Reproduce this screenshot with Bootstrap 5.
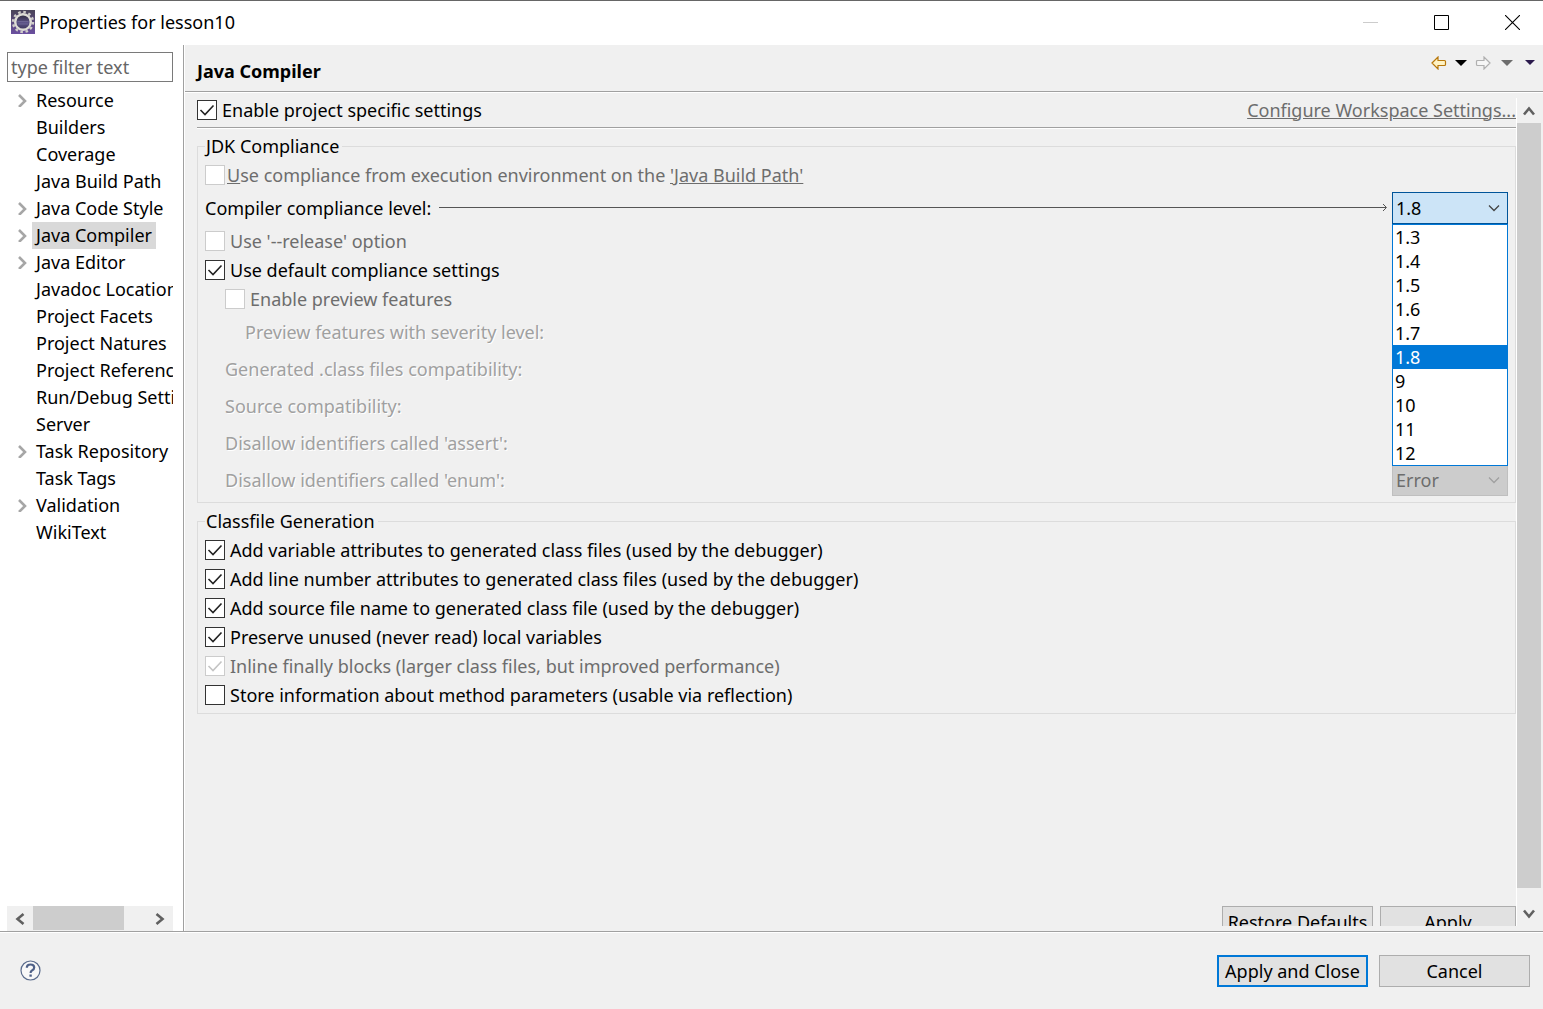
<!DOCTYPE html>
<html lang="en">
<head>
<meta charset="utf-8">
<meta name="viewport" content="width=device-width, initial-scale=1">
<title>Properties for lesson10</title>
<link href="https://cdn.jsdelivr.net/npm/bootstrap@5.3.0/dist/css/bootstrap.min.css" rel="stylesheet">
<style>
body{font-family:"Noto Sans","Open Sans",sans-serif;font-size:18px;line-height:24px;color:#000;background:#f0f0f0;min-height:600px}
svg{display:block;flex:none}
.titlebar{height:45px;border-top:1px solid #666;background:#fff;padding:0 0 2px 11px}
.winbtns{gap:9px}
.winbtn{border:0;background:none;padding:0;width:62px;height:42px;display:flex;align-items:center;justify-content:center}
.side{width:184px;background:#fff;border-right:1px solid #a0a0a0;padding:7px 10px 0 7px}
.filter{height:30px;border:1px solid #7a7a7a;border-radius:0;padding:0 3px;font-size:18px;line-height:24px;color:#000}
.filter::placeholder{color:#666}
.tree{margin:5px 0 0;padding:0}
.tree li{height:27px;padding-left:10px}
.tree a{color:#000;text-decoration:none;line-height:27px;padding:0 4px;white-space:nowrap}
.tree a.current{background:#d9d9d9}
.twist{width:15px;height:13px;flex:none}
.hbar{height:25px;background:#f0f0f0}
.arrow{width:26px;height:25px;border:0;padding:0;background:none;display:flex;align-items:center;justify-content:center}
.hthumb{width:91px;height:24px;background:#cdcdcd}
.pagehead{height:48px;border-bottom:1px solid #fff;box-shadow:inset 0 -1px #a0a0a0;padding:4px 8px 0 12px}
.pagehead h1{font-size:18px;line-height:24px;font-weight:700;margin:0}
.tool{border:0;background:none;padding:0}
.content{padding:2px 1px 5px 12px}
.line{height:29px}
.combo-line{height:37px}
.rule{height:2px;margin:3px 0;background:#a0a0a0;border-bottom:1px solid #fff}
.grp{border:1px solid #dcdcdc;padding:0 7px 4px;margin-bottom:4px}
.grp legend{float:none;width:auto;margin:0;padding:0 3px 0 1px;font-size:18px;line-height:28px}
.tick{appearance:none;width:20px;height:20px;margin:0 5px 0 0;border:1px solid #333;background:#fff center/18px 18px no-repeat;flex:none}
.tick:checked{background-image:url("data:image/svg+xml,%3Csvg xmlns='http://www.w3.org/2000/svg' viewBox='0 0 18 18'%3E%3Cpath d='M2.5 9 L7 13.5 L15.5 4.5' fill='none' stroke='%23222' stroke-width='1.6'/%3E%3C/svg%3E")}
.tick:disabled{border-color:#ccc}
.tick:disabled:checked{background-image:url("data:image/svg+xml,%3Csvg xmlns='http://www.w3.org/2000/svg' viewBox='0 0 18 18'%3E%3Cpath d='M2.5 9 L7 13.5 L15.5 4.5' fill='none' stroke='%23c4c4c4' stroke-width='1.6'/%3E%3C/svg%3E")}
.tick:disabled+label,.dim,.dim a{color:#6d6d6d}
.tight{margin-right:2px}
.in1{padding-left:20px}
.in2{padding-left:40px}
.etched{color:#a0a0a0;text-shadow:1px 1px #fff}
.leader{height:1px;background:#555}
.combo{width:116px;height:32px;border:1px solid #bfbfbf;border-radius:0;appearance:none;padding:0 3px;font-size:18px;line-height:24px;color:#6d6d6d;opacity:1;background:#ccc url("data:image/svg+xml,%3Csvg xmlns='http://www.w3.org/2000/svg' viewBox='0 0 12 8'%3E%3Cpath d='M1 1.5 L6 6.5 L11 1.5' fill='none' stroke='%23a0a0a0' stroke-width='1.3'/%3E%3C/svg%3E") right 7px center/12px 8px no-repeat}
.combo.open{border-color:#005499;color:#000;background-color:#cce4f7;background-image:url("data:image/svg+xml,%3Csvg xmlns='http://www.w3.org/2000/svg' viewBox='0 0 12 8'%3E%3Cpath d='M1 1.5 L6 6.5 L11 1.5' fill='none' stroke='%23444' stroke-width='1.3'/%3E%3C/svg%3E")}
.levels{position:absolute;top:100%;left:0;width:100%;min-width:0;padding:0;margin:0;border:1px solid #0078d7;border-radius:0;background:#fff;font-size:18px;color:#000}
.levels .dropdown-item{padding:0 2px;line-height:24px;color:#000}
.levels .dropdown-item.active{background:#0078d7;color:#fff}
.cmd{height:32px;min-width:151px;border:1px solid #adadad;border-radius:0;background:#e1e1e1;color:#000;font-size:18px;line-height:24px;padding:0 3px}
.cmd.primary{border:2px solid #0078d7}
.cmd.short{min-width:136px}
.cut{height:20px;overflow:hidden;gap:7px}
.vbar{width:24px;margin:5px 2px 5px 0;box-shadow:-1px 0 #fff}
.vbar .arrow{width:24px}
.vthumb{height:765px;flex:0 1 765px;background:#cdcdcd}
.foot{height:78px;border-top:1px solid #a0a0a0;box-shadow:inset 0 1px #fff;padding:0 13px 0 20px}
.footbtns{gap:11px}
</style>
</head>
<body class="vh-100 d-flex flex-column overflow-hidden">
<header class="titlebar d-flex align-items-center flex-shrink-0">
  <svg width="24" height="24" viewBox="0 0 24 24" aria-hidden="true">
    <defs><linearGradient id="sky" x1="0" y1="0" x2="0" y2="1"><stop offset="0" stop-color="#4a4458"/><stop offset="1" stop-color="#6b4fa0"/></linearGradient>
    <linearGradient id="core" x1="0" y1="0" x2="0" y2="1"><stop offset="0" stop-color="#2c2838"/><stop offset=".55" stop-color="#5d5389"/><stop offset="1" stop-color="#3a3358"/></linearGradient></defs>
    <rect width="24" height="24" fill="url(#sky)"/>
    <circle cx="12" cy="12" r="10" fill="none" stroke="#cfcdc9" stroke-width="2.400" stroke-dasharray="2.6 2.636"/>
    <circle cx="12" cy="12" r="7.800" fill="url(#core)" stroke="#dedcd6" stroke-width="2.400"/>
    <path d="M6.500 11.500h11M7 14h10" stroke="#7d76a5" stroke-width=".6"/>
  </svg>
  <span class="ms-1 me-auto">Properties for lesson10</span>
  <div class="winbtns d-flex">
    <button class="winbtn" aria-label="Minimize" disabled><svg width="15" height="15"><path d="M0 7.500h15" stroke="#ccc"/></svg></button>
    <button class="winbtn" aria-label="Maximize"><svg width="15" height="15"><path d="M.5 .5h14v14h-14z" fill="none" stroke="#000"/></svg></button>
    <button class="winbtn" aria-label="Close"><svg width="15" height="15"><path d="M0 0l15 15M15 0L0 15" stroke="#000" stroke-width="1.1"/></svg></button>
  </div>
</header>

<div class="d-flex flex-grow-1 overflow-hidden">
  <nav class="side d-flex flex-column flex-shrink-0" aria-label="Property pages">
    <input class="filter w-100 flex-shrink-0" type="text" placeholder="type filter text" aria-label="type filter text">
    <ul class="tree list-unstyled flex-grow-1 overflow-hidden">
      <li class="d-flex align-items-center"><svg class="twist" viewBox="0 0 15 13"><path d="M2 1l6 6l-6 6" fill="none" stroke="#a6a6a6" stroke-width="2.600"/></svg><a href="#">Resource</a></li>
      <li class="d-flex align-items-center"><span class="twist"></span><a href="#">Builders</a></li>
      <li class="d-flex align-items-center"><span class="twist"></span><a href="#">Coverage</a></li>
      <li class="d-flex align-items-center"><span class="twist"></span><a href="#">Java Build Path</a></li>
      <li class="d-flex align-items-center"><svg class="twist" viewBox="0 0 15 13"><path d="M2 1l6 6l-6 6" fill="none" stroke="#a6a6a6" stroke-width="2.600"/></svg><a href="#">Java Code Style</a></li>
      <li class="d-flex align-items-center"><svg class="twist" viewBox="0 0 15 13"><path d="M2 1l6 6l-6 6" fill="none" stroke="#a6a6a6" stroke-width="2.600"/></svg><a href="#" class="current" aria-current="page">Java Compiler</a></li>
      <li class="d-flex align-items-center"><svg class="twist" viewBox="0 0 15 13"><path d="M2 1l6 6l-6 6" fill="none" stroke="#a6a6a6" stroke-width="2.600"/></svg><a href="#">Java Editor</a></li>
      <li class="d-flex align-items-center"><span class="twist"></span><a href="#">Javadoc Location</a></li>
      <li class="d-flex align-items-center"><span class="twist"></span><a href="#">Project Facets</a></li>
      <li class="d-flex align-items-center"><span class="twist"></span><a href="#">Project Natures</a></li>
      <li class="d-flex align-items-center"><span class="twist"></span><a href="#">Project References</a></li>
      <li class="d-flex align-items-center"><span class="twist"></span><a href="#">Run/Debug Settings</a></li>
      <li class="d-flex align-items-center"><span class="twist"></span><a href="#">Server</a></li>
      <li class="d-flex align-items-center"><svg class="twist" viewBox="0 0 15 13"><path d="M2 1l6 6l-6 6" fill="none" stroke="#a6a6a6" stroke-width="2.600"/></svg><a href="#">Task Repository</a></li>
      <li class="d-flex align-items-center"><span class="twist"></span><a href="#">Task Tags</a></li>
      <li class="d-flex align-items-center"><svg class="twist" viewBox="0 0 15 13"><path d="M2 1l6 6l-6 6" fill="none" stroke="#a6a6a6" stroke-width="2.600"/></svg><a href="#">Validation</a></li>
      <li class="d-flex align-items-center"><span class="twist"></span><a href="#">WikiText</a></li>
    </ul>
    <div class="hbar d-flex flex-shrink-0">
      <button class="arrow" aria-label="Scroll left"><svg width="10" height="12"><path d="M8.500 1l-6 5l6 5" fill="none" stroke="#606060" stroke-width="2.600"/></svg></button>
      <div class="hthumb me-auto"></div>
      <button class="arrow" aria-label="Scroll right"><svg width="10" height="12"><path d="M1.500 1l6 5l-6 5" fill="none" stroke="#606060" stroke-width="2.600"/></svg></button>
    </div>
  </nav>

  <main class="d-flex flex-column flex-grow-1 overflow-hidden border-start border-white">
    <div class="pagehead d-flex align-items-center flex-shrink-0">
      <h1 class="me-auto">Java Compiler</h1>
      <div class="d-flex align-items-center gap-2 pb-3">
        <button class="tool" aria-label="Back"><svg width="16" height="14"><path d="M1 7l6-6v3.500h6.500q1 0 1 1v3q0 1-1 1H7V13z" fill="#fff3c4" stroke="#b8780c" stroke-width="1.200"/></svg></button>
        <button class="tool" aria-label="Back history"><svg width="12" height="6"><path d="M0 0h12l-6 6z"/></svg></button>
        <button class="tool tight" aria-label="Forward" disabled><svg width="16" height="14"><path d="M15 7l-6-6v3.500H2.500q-1 0-1 1v3q0 1 1 1H9V13z" fill="#f6f6f6" stroke="#b0b0b0" stroke-width="1.200"/></svg></button>
        <button class="tool" aria-label="Forward history" disabled><svg width="12" height="6"><path d="M0 0h12l-6 6z" fill="#6d6d6d"/></svg></button>
        <button class="tool ms-1" aria-label="View menu"><svg width="10" height="5"><path d="M0 0h10l-5 5z" fill="#2b1a4d"/></svg></button>
      </div>
    </div>
    <div class="d-flex flex-grow-1 overflow-hidden">
      <div class="content d-flex flex-column flex-grow-1 overflow-hidden">
        <div class="line d-flex align-items-center flex-shrink-0">
          <input class="tick" type="checkbox" id="enable" checked><label for="enable" class="me-auto">Enable project specific settings</label>
          <span class="dim"><a href="#">Configure Workspace Settings...</a></span>
        </div>
        <div class="rule flex-shrink-0"></div>

        <fieldset class="grp">
          <legend>JDK Compliance</legend>
          <div class="line d-flex align-items-center dim"><input class="tick tight" type="checkbox" id="execenv" disabled><label for="execenv"><u>U</u>se compliance from execution environment on the <a href="#">'Java Build Path'</a></label></div>
          <div class="combo-line d-flex align-items-center">
            <label for="level">Compiler compliance level:</label>
            <span class="leader flex-grow-1 ms-2"></span>
            <svg class="me-1" width="7" height="9"><path d="M0 4.500h5M2 1l3.500 3.500l-3.500 3.500" fill="none" stroke="#555"/></svg>
            <div class="position-relative">
              <select class="combo open d-block" id="level"><option>1.3</option><option>1.4</option><option>1.5</option><option>1.6</option><option>1.7</option><option selected>1.8</option><option>9</option><option>10</option><option>11</option><option>12</option></select>
              <div class="levels dropdown-menu show">
                <button class="dropdown-item">1.3</button><button class="dropdown-item">1.4</button><button class="dropdown-item">1.5</button><button class="dropdown-item">1.6</button><button class="dropdown-item">1.7</button><button class="dropdown-item active">1.8</button><button class="dropdown-item">9</button><button class="dropdown-item">10</button><button class="dropdown-item">11</button><button class="dropdown-item">12</button>
              </div>
            </div>
          </div>
          <div class="line d-flex align-items-center"><input class="tick" type="checkbox" id="release" disabled><label for="release">Use '--release' option</label></div>
          <div class="line d-flex align-items-center"><input class="tick" type="checkbox" id="defaults" checked><label for="defaults">Use default compliance settings</label></div>
          <div class="line in1 d-flex align-items-center"><input class="tick" type="checkbox" id="preview" disabled><label for="preview">Enable preview features</label></div>
          <div class="combo-line in2 etched d-flex align-items-center"><span>Preview features with severity level:</span></div>
          <div class="combo-line in1 etched d-flex align-items-center"><span>Generated .class files compatibility:</span></div>
          <div class="combo-line in1 etched d-flex align-items-center"><span>Source compatibility:</span></div>
          <div class="combo-line in1 etched d-flex align-items-center"><span>Disallow identifiers called 'assert':</span></div>
          <div class="combo-line in1 etched d-flex align-items-center"><label for="enums" class="me-auto">Disallow identifiers called 'enum':</label><select class="combo" id="enums" disabled><option>Error</option></select></div>
        </fieldset>

        <fieldset class="grp">
          <legend>Classfile Generation</legend>
          <div class="line d-flex align-items-center"><input class="tick" type="checkbox" id="vars" checked><label for="vars">Add variable attributes to generated class files (used by the debugger)</label></div>
          <div class="line d-flex align-items-center"><input class="tick" type="checkbox" id="lines" checked><label for="lines">Add line number attributes to generated class files (used by the debugger)</label></div>
          <div class="line d-flex align-items-center"><input class="tick" type="checkbox" id="source" checked><label for="source">Add source file name to generated class file (used by the debugger)</label></div>
          <div class="line d-flex align-items-center"><input class="tick" type="checkbox" id="unused" checked><label for="unused">Preserve unused (never read) local variables</label></div>
          <div class="line d-flex align-items-center"><input class="tick" type="checkbox" id="inline" checked disabled><label for="inline">Inline finally blocks (larger class files, but improved performance)</label></div>
          <div class="line d-flex align-items-center"><input class="tick" type="checkbox" id="params"><label for="params">Store information about method parameters (usable via reflection)</label></div>
        </fieldset>

        <div class="cut d-flex justify-content-end mt-auto flex-shrink-0">
          <button class="cmd">Restore Defaults</button><button class="cmd short">Apply</button>
        </div>
      </div>
      <div class="vbar d-flex flex-column flex-shrink-0">
        <button class="arrow" aria-label="Scroll up"><svg width="12" height="10"><path d="M1 8.500l5-6l5 6" fill="none" stroke="#606060" stroke-width="2.600"/></svg></button>
        <div class="vthumb"></div>
        <button class="arrow mt-auto" aria-label="Scroll down"><svg width="12" height="10"><path d="M1 1.500l5 6l5-6" fill="none" stroke="#606060" stroke-width="2.600"/></svg></button>
      </div>
    </div>
  </main>
</div>

<footer class="foot d-flex align-items-center flex-shrink-0">
  <button class="tool me-auto" aria-label="Help"><svg width="21" height="21" viewBox="0 0 21 21"><circle cx="10.500" cy="10.500" r="9.500" fill="#f8f8f8" stroke="#5a6b8c" stroke-width="1.200"/><path d="M6.800 7.800Q6.800 4.500 10.500 4.500T14.200 7.500Q14.200 9.200 12.300 10.200T10.600 13" fill="none" stroke="#4f6188" stroke-width="2.200"/><path d="M9.400 14.500h2.400v2.200H9.400z" fill="#4f6188"/></svg></button>
  <div class="footbtns d-flex"><button class="cmd primary">Apply and Close</button><button class="cmd">Cancel</button></div>
</footer>
<script src="https://cdn.jsdelivr.net/npm/bootstrap@5.3.0/dist/js/bootstrap.bundle.min.js"></script>
</body>
</html>
